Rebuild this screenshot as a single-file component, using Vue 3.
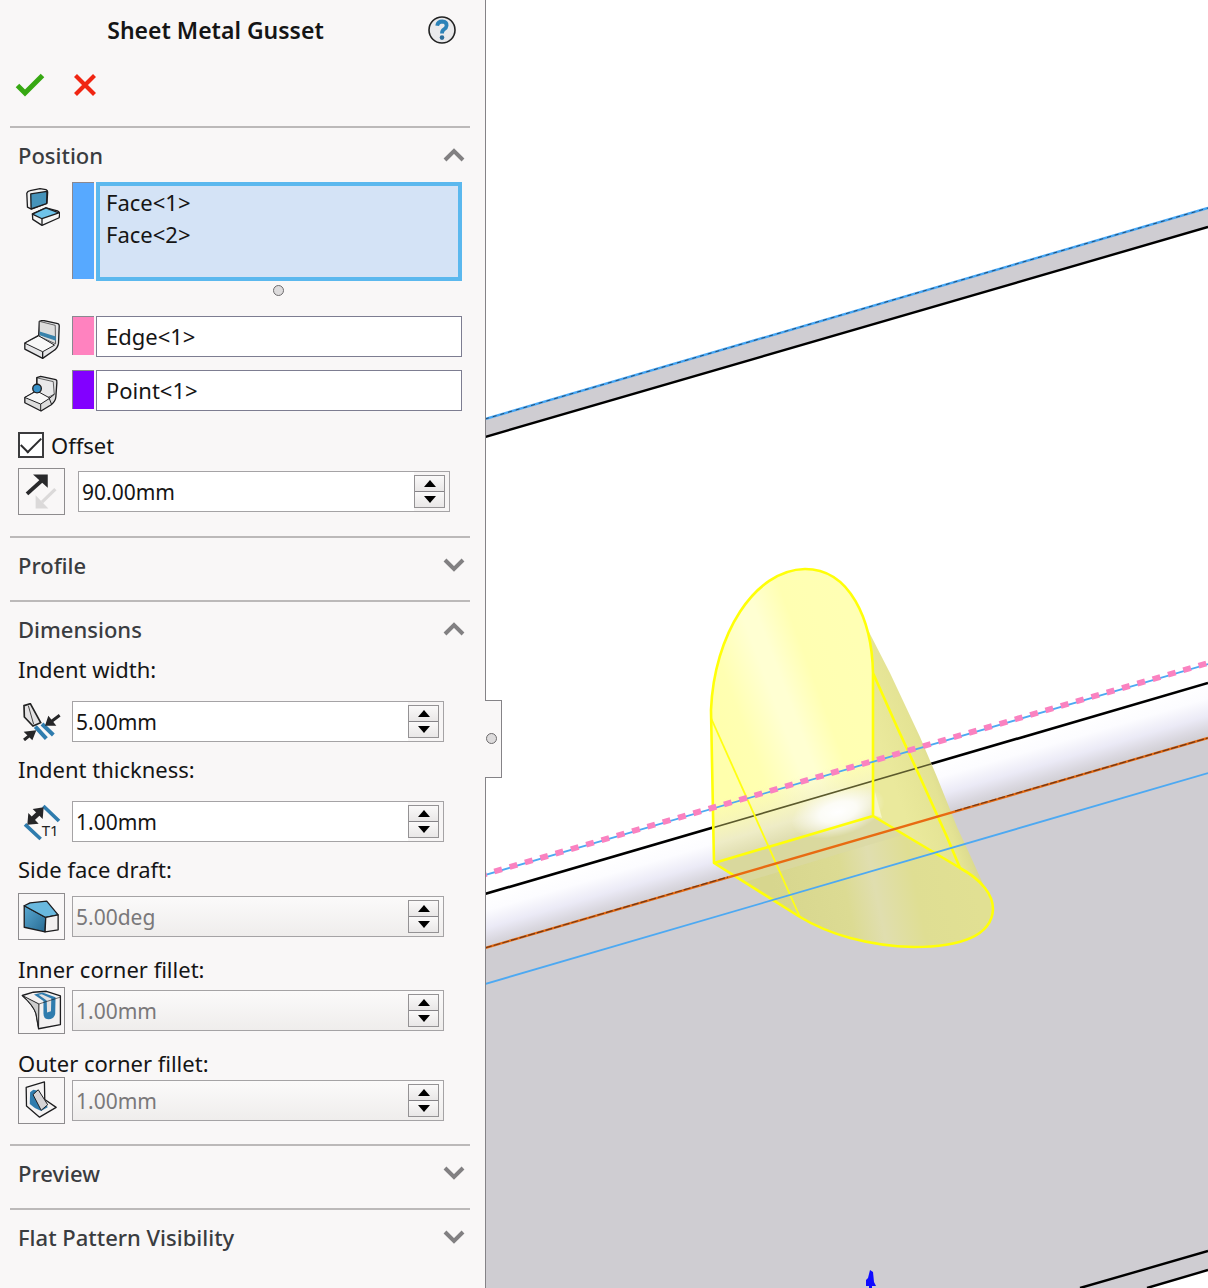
<script setup>
import { reactive, ref } from 'vue'

const open = reactive({ position: true, profile: false, dimensions: true, preview: false, flat: false })
const offsetOn = ref(true)
const offset = ref('90.00mm')
const faces = ['Face<1>', 'Face<2>']
const dims = reactive([
  { id: 'width', label: 'Indent width:', value: '5.00mm', gap: 'wide' },
  { id: 'thickness', label: 'Indent thickness:', value: '1.00mm', gap: 'wide' },
  { id: 'draft', label: 'Side face draft:', value: '5.00deg', gap: 'normal', toggle: true },
  { id: 'inner', label: 'Inner corner fillet:', value: '1.00mm', gap: 'small', toggle: true },
  { id: 'outer', label: 'Outer corner fillet:', value: '1.00mm', gap: 'none', toggle: true }
])

function step(item, delta) {
  const unit = item.value.replace(/[\d.]/g, '')
  item.value = (parseFloat(item.value) + delta).toFixed(2) + unit
}
function stepOffset(delta) {
  offset.value = (parseFloat(offset.value) + delta).toFixed(2) + 'mm'
}
</script>

<template>
  <main class="app">
    <aside class="panel">
      <header class="title">
        <h1>Sheet Metal Gusset</h1>
        <button class="bare help" aria-label="Help">
          <svg viewBox="0 0 30 30" width="30" height="30">
            <circle cx="15" cy="15" r="13" fill="#e9e9eb" stroke="#222" stroke-width="1.6" />
            <path d="M10.2 10.8 Q10.8 6.5 15.3 6.5 Q19.8 6.8 19.6 10.6 Q19.4 13 17 14.4 Q15 15.6 15 18.4" fill="none" stroke="#2b82b8" stroke-width="3.8" />
            <circle cx="15" cy="22.6" r="2.3" fill="#2b6d9c" />
          </svg>
        </button>
      </header>

      <div class="actions">
        <button class="bare" aria-label="OK">
          <svg viewBox="0 0 30 24" width="30" height="24"><path d="M2.5 12.5 L10 20 L27.5 2.5" fill="none" stroke="#37a813" stroke-width="5" /></svg>
        </button>
        <button class="bare" aria-label="Cancel">
          <svg viewBox="0 0 24 24" width="24" height="24"><path d="M2.5 2.5 L21.5 21.5 M21.5 2.5 L2.5 21.5" fill="none" stroke="#f02512" stroke-width="4.2" /></svg>
        </button>
      </div>

      <section class="section">
        <h2><button class="bare head" :aria-expanded="open.position" @click="open.position = !open.position">Position
          <svg class="chev" :class="{ up: open.position }" viewBox="0 0 22 14" width="22" height="14"><path d="M2 2 L11 11 L20 2" /></svg></button></h2>
        <div v-if="open.position" class="body position">
          <div class="pick">
            <div class="pic top">
              <svg viewBox="42 22 108 118" width="36" height="39" class="ink">
                <path d="M50 38 Q52 31 60 30 L90 24 L108 27 Q114 30 113 36 L111 68 L64 86 L52 80 Z" fill="#f2f2f2" />
                <path d="M62 40 L111 32 L110 69 L63 85 Z" fill="#4693ba" />
                <path d="M67 100 L108 82 L143 91 Q151 95 149 104 L148 112 L96 135 L68 117 Z" fill="#f5f5f5" />
                <path d="M67 101 L108 82 L147 97 L96 115 Z" fill="#6ec3ea" /><path d="M96 116 V134" />
              </svg>
            </div>
            <i class="swatch blue"></i>
            <ul class="faces" role="listbox" aria-label="Faces">
              <li v-for="f in faces" :key="f" role="option">{{ f }}</li>
            </ul>
          </div>
          <div class="grip"><i class="dot"></i></div>
          <div class="pick">
            <div class="pic">
              <svg viewBox="42 420 108 118" width="36" height="39" class="ink">
                <path d="M88 424 L98 421 L144 431 Q149 433 148 440 L146 490 Q144 505 130 514 L98 536 L44 508 V490 L86 466 Z" fill="#e6e6e8" />
                <path d="M88 424 L136 436 L137 492 L88 470 Z" fill="#ddd" stroke-width="2" />
                <path d="M44 490 L86 468 L134 496 L98 516 Z" fill="#f8f8f8" stroke-width="3" /><path d="M98 516 V536" />
                <path d="M89 455 L138 470 V483 L89 466 Z" fill="#3982ab" stroke="none" />
              </svg>
            </div>
            <i class="swatch pink"></i>
            <input class="box" aria-label="Edge" value="Edge&lt;1&gt;" readonly>
          </div>
          <div class="pick second">
            <div class="pic">
              <svg viewBox="42 584 108 112" width="36" height="37" class="ink">
                <path d="M80 592 L92 588 L138 598 Q142 600 141 607 L138 650 Q137 664 124 674 L93 693 L44 668 V652 L80 632 Z" fill="#ddd" />
                <path d="M82 593 L130 604 L133 642 L112 653 L82 636 Z" fill="#e9e9ea" stroke-width="2" />
                <path d="M44 652 L80 632 L120 654 L92 672 Z" fill="#f8f8f8" stroke-width="3" />
                <path d="M92 672 V692 M118 655 L125 673 M118 655 L134 642" stroke-width="3" />
                <circle cx="81" cy="625" r="13" fill="#3791c8" />
              </svg>
            </div>
            <i class="swatch violet"></i>
            <input class="box" aria-label="Point" value="Point&lt;1&gt;" readonly>
          </div>
          <label class="check">
            <input v-model="offsetOn" type="checkbox">
            <span>Offset</span>
          </label>
          <div class="row offset">
            <button class="tool" aria-label="Reverse direction">
              <svg viewBox="56 146 141 141" width="45" height="45">
                <path d="M170 209 L128 250" stroke="#dbd9d9" stroke-width="10" />
                <path d="M108 228 V270 H148 Z" fill="#dbd9d9" />
                <path d="M81 224 L132 178" stroke="#29292b" stroke-width="12" />
                <path d="M100 163 H146 V205 Z" fill="#29292b" />
              </svg>
            </button>
            <div class="spin">
              <input v-model="offset" aria-label="Offset distance" :disabled="!offsetOn">
              <div class="stepper">
                <button aria-label="Increase" @click="stepOffset(1)"><i class="tri"></i></button>
                <button aria-label="Decrease" @click="stepOffset(-1)"><i class="tri down"></i></button>
              </div>
            </div>
          </div>
        </div>
      </section>

      <section class="section">
        <h2><button class="bare head" :aria-expanded="open.profile" @click="open.profile = !open.profile">Profile
          <svg class="chev" :class="{ up: open.profile }" viewBox="0 0 22 14" width="22" height="14"><path d="M2 2 L11 11 L20 2" /></svg></button></h2>
      </section>

      <section class="section">
        <h2><button class="bare head" :aria-expanded="open.dimensions" @click="open.dimensions = !open.dimensions">Dimensions
          <svg class="chev" :class="{ up: open.dimensions }" viewBox="0 0 22 14" width="22" height="14"><path d="M2 2 L11 11 L20 2" /></svg></button></h2>
        <div v-if="open.dimensions" class="body dims">
          <div v-for="d in dims" :key="d.id" class="field" :class="d.gap">
            <label :for="d.id">{{ d.label }}</label>
            <div class="row">
              <component :is="d.toggle ? 'button' : 'div'" :class="d.toggle ? 'tool' : 'pic'" :aria-label="d.toggle ? d.label : null">
                <svg v-if="d.id === 'width'" viewBox="40 36 114 114" width="38" height="38">
                  <path d="M77 107 L110 143 M97 99 L131 132" stroke="#2f7cae" stroke-width="12" />
                  <path d="M43 44 L62 38 L93 95 L70 105 L44 78 Z" fill="#e4e2e3" stroke="#222" stroke-width="5" />
                  <path d="M56 44 L72 100" stroke="#444" stroke-width="3" />
                  <path d="M150 73 L124 92 M43 147 L64 130" stroke="#262628" stroke-width="9" />
                  <path d="M106 104 L116 74 L140 104 Z M80 118 L42 122 L68 148 Z" fill="#262628" />
                </svg>
                <svg v-else-if="d.id === 'thickness'" viewBox="40 332 114 114" width="38" height="38">
                  <path d="M101 341 L148 386 M46 396 L93 440" stroke="#2f7cae" stroke-width="11" />
                  <path d="M62 386 L94 356" stroke="#262628" stroke-width="14" />
                  <path d="M102 345 L99 380 L69 350 Z M53 397 L56 362 L87 394 Z" fill="#262628" />
                  <text x="96" y="431" font-size="45" fill="#222">T1</text>
                </svg>
                <svg v-else-if="d.id === 'draft'" viewBox="28 40 138 138" width="45" height="45" class="ink">
                  <defs>
                    <linearGradient id="cube" x1="0" y1="0" x2="1" y2="1"><stop offset="0" stop-color="#5aa9d2" /><stop offset="1" stop-color="#276a92" /></linearGradient>
                  </defs>
                  <path d="M44 76 L110 112 L108 156 L44 142 Z" fill="url(#cube)" />
                  <path d="M44 76 L62 67 L113 62 L148 104 L110 112 Z" fill="#69b9df" />
                  <path d="M110 112 L148 104 V150 L108 156 Z" fill="#f2f0f0" />
                </svg>
                <svg v-else-if="d.id === 'inner'" viewBox="28 322 138 138" width="45" height="45" class="ink">
                  <path d="M38 345 L72 335 L112 332 L155 346 V434 L88 447 L80 400 Q72 375 38 345 Z" fill="#f3f1f1" />
                  <path d="M38 345 L89 371 L88 445 L80 400 Q72 375 38 345 Z" fill="#ccc" stroke-width="3" />
                  <path d="M74 342 L100 336 L140 350 L139 402 Q136 417 119 418 Q103 418 103 400 V362 Z" fill="#2f7cae" stroke="none" />
                  <path d="M88 343 L98 341 L127 354 L126 393 L114 397 L113 360 Z" fill="#e3e1e2" stroke="none" />
                  <path d="M89 371 L155 350" stroke-width="2" />
                </svg>
                <svg v-else viewBox="28 592 138 138" width="45" height="45" class="ink">
                  <path d="M50 621 L106 604 L107 658 L142 682 L91 712 L51 678 Z" fill="#f5f3f3" />
                  <path d="M62 636 L72 628 L90 632 L116 682 L96 693 Q76 687 61 672 Z" fill="#2f7cae" stroke="none" />
                  <path d="M71 643 L87 628 L116 674 L96 691 Z" fill="#d6d4d6" stroke-width="3" />
                </svg>
              </component>
              <div class="spin" :class="{ off: d.toggle }">
                <input :id="d.id" v-model="d.value" :disabled="d.toggle">
                <div class="stepper">
                  <button aria-label="Increase" @click="step(d, 1)"><i class="tri"></i></button>
                  <button aria-label="Decrease" @click="step(d, -1)"><i class="tri down"></i></button>
                </div>
              </div>
            </div>
          </div>
        </div>
      </section>

      <section class="section">
        <h2><button class="bare head" :aria-expanded="open.preview" @click="open.preview = !open.preview">Preview
          <svg class="chev" :class="{ up: open.preview }" viewBox="0 0 22 14" width="22" height="14"><path d="M2 2 L11 11 L20 2" /></svg></button></h2>
      </section>
      <section class="section">
        <h2><button class="bare head" :aria-expanded="open.flat" @click="open.flat = !open.flat">Flat Pattern Visibility
          <svg class="chev" :class="{ up: open.flat }" viewBox="0 0 22 14" width="22" height="14"><path d="M2 2 L11 11 L20 2" /></svg></button></h2>
      </section>

      <button class="handle" aria-label="Resize panel"><i class="dot"></i></button>
    </aside>

    <div class="view">
      <svg viewBox="486 0 722 1288" preserveAspectRatio="xMinYMin slice" role="img" aria-label="Gusset model">
        <defs>
          <linearGradient id="bend" gradientUnits="userSpaceOnUse" x1="486" y1="894" x2="501" y2="945">
            <stop offset="0" stop-color="#ffffff" /><stop offset=".3" stop-color="#fcfcff" />
            <stop offset=".62" stop-color="#ebeaf6" /><stop offset=".85" stop-color="#dad8e0" /><stop offset="1" stop-color="#d0ced3" />
          </linearGradient>
          <linearGradient id="front" gradientUnits="userSpaceOnUse" x1="712" y1="740" x2="873" y2="680">
            <stop offset="0" stop-color="#ffffac" /><stop offset=".2" stop-color="#ffffb2" />
            <stop offset=".42" stop-color="#ffffd2" /><stop offset=".5" stop-color="#ffffd2" /><stop offset=".68" stop-color="#ffffb2" /><stop offset="1" stop-color="#ffffb4" />
          </linearGradient>
          <linearGradient id="fade" gradientUnits="userSpaceOnUse" x1="712" y1="802" x2="729" y2="858">
            <stop offset="0" stop-color="#f4f2bb" stop-opacity="0" /><stop offset=".7" stop-color="#eeecc6" /><stop offset="1" stop-color="#dfddaf" />
          </linearGradient>
          <linearGradient id="side" gradientUnits="userSpaceOnUse" x1="885" y1="760" x2="955" y2="735">
            <stop offset="0" stop-color="#eae99c" /><stop offset=".5" stop-color="#e4e394" /><stop offset="1" stop-color="#c9c886" />
          </linearGradient>
          <linearGradient id="foot" gradientUnits="userSpaceOnUse" x1="780" y1="920" x2="975" y2="880">
            <stop offset="0" stop-color="#d7d68e" /><stop offset=".35" stop-color="#dcdb93" />
            <stop offset=".5" stop-color="#e0deaf" /><stop offset=".7" stop-color="#dfde93" /><stop offset="1" stop-color="#e1e093" />
          </linearGradient>
          <radialGradient id="shine"><stop offset="0" stop-color="#fff" /><stop offset=".4" stop-color="#fff" stop-opacity=".85" /><stop offset="1" stop-color="#fff" stop-opacity="0" /></radialGradient>
        </defs>
        <rect x="486" width="722" height="1288" fill="#fff" />
        <path d="M485 419 L1208 208 V227 L485 437 Z" fill="#cfcdd2" />
        <path d="M485 419 L1208 208" stroke="#45a6f5" stroke-width="2.4" />
        <path d="M485 419 L1208 208" stroke="#234c70" stroke-width="1" stroke-dasharray="4 4" />
        <path d="M485 437 L1208 227" stroke="#000" stroke-width="2.4" />
        <path d="M485 894 L1208 683 V738 L485 948 Z" fill="url(#bend)" />
        <path d="M485 948 L1208 738 V1250 L1081 1288 H485 Z" fill="#cfcdd2" />
        <path d="M1081 1288 L1208 1250 V1270 L1148 1288 Z" fill="#cfcdd2" />
        <path d="M1080 1288 L1208 1251 M1147 1288 L1208 1270" stroke="#000" stroke-width="2.4" />
        <path d="M485 894 L1208 683" stroke="#000" stroke-width="2.6" />

        <path d="M869 632 L890 673 L905 705 L920 737 L937 777 L957 827 L970 855 L984 886 L960 868 L873 816 Z" fill="url(#side)" />
        <path d="M714 863 L873 816 L960 868 C982 880 993 895 993 909 C992 936 960 947 914 947 C868 946 828 934 800 917 Z" fill="url(#foot)" />
        <path d="M714 863 L711 710 C714 635 754 570 805 569 C850 569 872 620 873 673 V816 Z" fill="url(#front)" />
        <path d="M712 801 L873 754 V816 L714 863 Z" fill="url(#fade)" />
        <path d="M714 863 L873 816 L905 834 L745 882 Z" fill="#dad8a4" opacity=".7" />
        <ellipse cx="838" cy="812" rx="48" ry="24" fill="url(#shine)" transform="rotate(-16 838 812)" />
        <path d="M875 792 L882 818 L874 815 Z" fill="#f6f5c8" />
        <path d="M712 828 L931 764" stroke="#5b592c" stroke-width="1.6" />
        <path d="M711 718 L800 917" stroke="#ffff12" stroke-width="1.8" />
        <path d="M714 863 L711 710 C714 635 754 570 805 569 C850 569 872 620 873 673 V816 L714 863 L800 917 C828 934 868 946 914 947 C960 947 992 936 993 909 C993 895 982 880 960 868 L873 816 M873 673 L897 727 L920 777 L947 837 L960 868" fill="none" stroke="#ffff08" stroke-width="2.6" stroke-linejoin="round" />
        <path d="M485 948 L1208 738" stroke="#e86b12" stroke-width="2.4" />
        <path d="M485 948 L728 877 M955 811 L1208 738" stroke="#743713" stroke-width="1.2" stroke-dasharray="7 2" />
        <path d="M485 984 L1208 773" stroke="#4da9f2" stroke-width="1.8" />
        <path d="M485 875 L1208 664" stroke="#4da9f2" stroke-width="1.8" />
        <path d="M479 876 L1208 663" stroke="#fa82c0" stroke-width="5.8" stroke-dasharray="8 7.95" />
        <path d="M870 1270 L873 1272 L874 1282 L876 1286 H872 V1288 H869 V1286 H866 V1280 L868 1278 Z" fill="#100cff" />
      </svg>
    </div>
  </main>
</template>

<style>
body { margin: 0; }
</style>

<style scoped>
* { box-sizing: border-box; }
.app {
  display: grid;
  grid-template-columns: 486px 1fr;
  min-height: 100vh;
  font-family: "Noto Sans", "Open Sans", sans-serif;
  font-size: 22px;
  color: #151515;
}
button, input { font: inherit; color: inherit; margin: 0; }
.bare { background: none; border: 0; padding: 0; display: flex; }
.panel {
  position: relative;
  background: #f9f7f7;
  border-right: 1px solid #858387;
  padding: 0 15px 0 10px;
}
.title { display: flex; align-items: center; height: 60px; padding-right: 13px; }
.title h1 { flex: 1; margin: 0; padding-right: 6px; text-align: center; font-size: 23px; font-weight: 600; line-height: 62px; }
.actions { display: flex; align-items: center; gap: 28px; height: 50px; padding-left: 5px; margin-bottom: 16px; }
.section { border-top: 2px solid #bcb9b9; }
h2 { margin: 0; }
.head {
  width: 100%;
  height: 54px;
  justify-content: space-between;
  align-items: center;
  padding: 0 5px 0 8px;
  font-size: 22px;
  font-weight: 500;
  color: #3a3c40;
}
.section h2:last-child { padding-bottom: 8px; }
.chev { fill: none; stroke: #828082; stroke-width: 4; }
.chev.up { transform: rotate(180deg); }
.position { padding: 0 8px 21px; }
.pick { display: flex; height: 41px; }
.pick:first-child { height: 99px; }
.second { margin-top: 13px; }
.pic { flex: none; width: 47px; display: flex; align-items: center; justify-content: center; }
.pick .pic { width: 54px; padding: 6px 6px 0 0; }
.pick .pic.top { align-items: flex-start; }
.swatch { width: 22px; margin: 0 2px 2px 0; border-left: 1px solid #8a8890; border-top: 1px solid #8a8890; }
.blue { background: #57a9ff; }
.pink { background: #ff82bf; }
.violet { background: #8200ff; }
.faces {
  flex: 1;
  margin: 0;
  padding: 0 6px;
  list-style: none;
  line-height: 32px;
  border: 4px solid #5bb8ee;
  background: #d4e3f6;
}
.box {
  flex: 1;
  min-width: 0;
  padding: 0 9px 2px;
  border: 1px solid #7d7d91;
  border-radius: 0;
  background: #fff;
}
.grip { height: 35px; display: flex; justify-content: center; padding: 4px 0 0 76px; }
.dot { width: 11px; height: 11px; border: 1px solid #6d6b6d; border-radius: 50%; background: #dddbdc; }
.check { display: flex; align-items: center; gap: 7px; height: 28px; margin: 20px 0 9px; }
.check input {
  appearance: none;
  width: 26px;
  height: 26px;
  border: 2px solid #3c3c3e;
  background: #fff;
  display: grid;
  place-items: center;
}
.check input:checked::before {
  content: "";
  width: 18px;
  height: 9px;
  border: solid #2c2c2e;
  border-width: 0 0 2px 2px;
  transform: translateY(-3px) rotate(-45deg);
}
.row { display: flex; align-items: center; gap: 7px; height: 47px; padding-right: 18px; }
.offset { gap: 13px; padding-right: 12px; }
.tool { flex: none; width: 47px; height: 47px; padding: 0; border: 1px solid #8e8c8e; background: #f9f7f7; display: flex; }
.spin { flex: 1; min-width: 0; height: 41px; display: flex; border: 1px solid #a5a3a5; background: #f7f5f5; }
.spin > input { flex: 1; min-width: 0; border: 0; padding: 0 3px; background: #fff; font-size: 21px; }
.off, .off > input { background: linear-gradient(#fbfafa, #efedec); }
.off > input { color: #7a787a; }
.stepper { width: 31px; margin: 3px 4px 3px 0; display: flex; flex-direction: column; border: 1px solid #949294; }
.stepper button { flex: 1; min-height: 0; padding: 0; border: 0; background: linear-gradient(#faf9f9, #e9e7e7); display: flex; align-items: center; justify-content: center; }
.stepper button + button { border-top: 1px solid #858387; }
.tri { border: 6px solid transparent; border-top: 0; border-bottom: 7px solid #000; }
.tri.down { transform: rotate(180deg); }
.dims { padding: 0 8px 20px; }
.field label { display: block; line-height: 26px; }
.wide .row { margin: 16px 0 11px; }
.normal .row { margin: 11px 0 16px; }
.small .row { margin: 5px 0 16px; }
.none .row { margin-top: 1px; }
.ink { stroke: #1d1d1f; stroke-width: 4; stroke-linejoin: round; fill: none; }
.handle {
  position: absolute;
  top: 700px;
  left: 485px;
  width: 17px;
  height: 78px;
  padding: 0 3px 2px 0;
  display: flex;
  align-items: center;
  justify-content: center;
  background: #f9f7f7;
  border: 1px solid #858387;
  border-left: 0;
  z-index: 1;
}
.handle .dot { flex: none; }
.view { min-width: 0; overflow: hidden; }
.view svg { display: block; width: 100%; height: 100%; }
</style>
